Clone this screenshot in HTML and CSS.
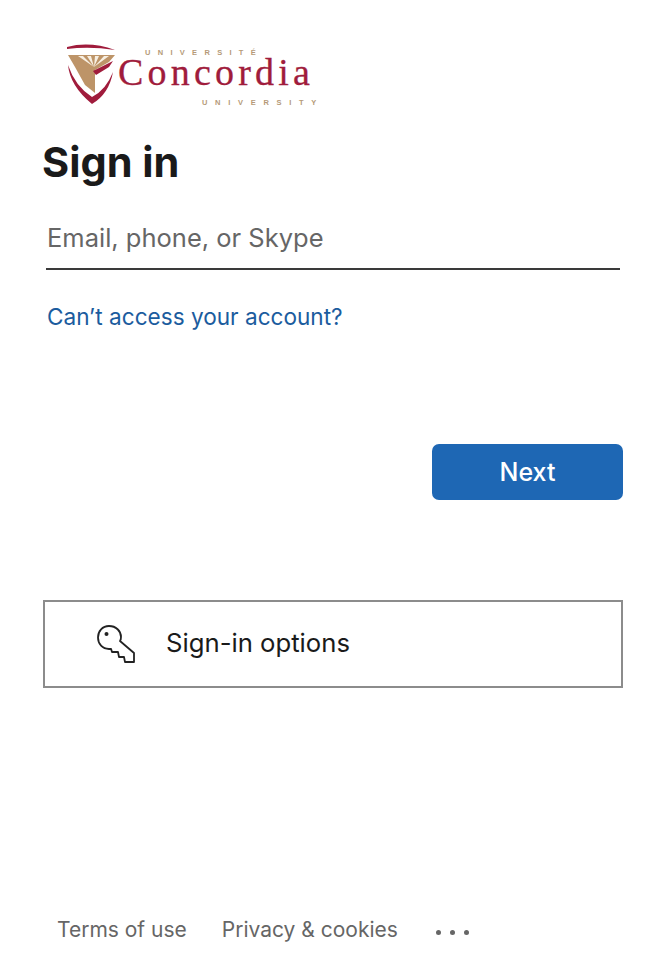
FILE: index.html
```html
<!DOCTYPE html>
<html lang="en">
<head>
  <meta charset="UTF-8">
  <title>Sign in</title>
  <link rel="stylesheet" href="styles.css">
</head>
<body>
  <div class="page">
    <svg class="logo" width="270" height="70" viewBox="0 0 270 70">
      <path d="M7 7 Q30 1 55 10 Q30 6 7 9 Z" fill="#a01c3c"/>
      <path d="M8 15 H55 L49 22 L35 30 V53 L25 45 L15 27 Z" fill="#bd9468"/>
      <path d="M18 16 L34 27 L23 16 Z M27 16 L34 27 L31 16 Z M35 16 L34 27 L39 16 Z M44 16 L34 27 L49 16 Z" fill="#f7efe2"/>
      <path d="M33 31 L53 21 L49 27 L36 35 Z" fill="#a01c3c"/>
      <path d="M8 25 Q10 46 32 64 Q49 54 53 32 Q46 50 32 57 Q15 46 8 25 Z" fill="#a01c3c"/>
      <text class="logo-small" x="85" y="15">UNIVERSITÉ</text>
      <text class="logo-name" x="58" y="45">Concordia</text>
      <text class="logo-small logo-wide" x="142" y="65">UNIVERSITY</text>
    </svg>

    <h1 class="title">Sign in</h1>

    <div class="field">Email, phone, or Skype</div>
    <a class="link" href="#">Can’t access your account?</a>

    <div class="actions">
      <button class="next">Next</button>
    </div>

    <div class="options">
      <svg class="key" width="40" height="40" viewBox="0 0 40 40">
        <path d="M13 2 C20 2 25 7 25 13 C25 14.500 24.700 16 24 17 L38 29 V38 H29 L28 33 H23 L22 28 H16 L15 24.800 C14.400 25 13.700 25 13 25 C6.500 25 2 20 2 13.500 C2 7 6.500 2 13 2 Z" fill="none" stroke="#222" stroke-width="1.800" stroke-linejoin="round"/>
        <circle cx="10.500" cy="10" r="2" fill="#222"/>
      </svg>
      <span class="options-label">Sign-in options</span>
    </div>

    <div class="footer">
      <a href="#">Terms of use</a>
      <a href="#">Privacy &amp; cookies</a>
      <span class="dots"><i></i><i></i><i></i></span>
    </div>
  </div>
</body>
</html>
```

FILE: styles.css
```css
* {
  margin: 0;
  padding: 0;
  box-sizing: border-box;
}

body {
  background: #fff;
  font-family: "Inter", "Liberation Sans", sans-serif;
}

.page {
  width: 666px;
  height: 954px;
  padding: 40px 43px 0;
  overflow: hidden;
}

.logo {
  display: block;
  margin-left: 17px;
}

.logo-name {
  font-family: "Liberation Serif", serif;
  font-size: 38px;
  letter-spacing: 4.200px;
  fill: #a01c3c;
  stroke: #a01c3c;
  stroke-width: 0.300px;
}

.logo-small {
  font-family: "Liberation Sans", sans-serif;
  font-size: 7.500px;
  font-weight: 700;
  letter-spacing: 7.300px;
  fill: #b59a78;
}

.logo-wide {
  letter-spacing: 7.700px;
}

.title {
  font-size: 41.500px;
  font-weight: 700;
  line-height: 50px;
  color: #1a1a1a;
  margin: 27px 0 0 -1px;
}

.field {
  margin: 25px 3px 0;
  width: 574px;
  height: 58px;
  padding: 10px 1px 0;
  border-bottom: 2px solid #3a3a3a;
  font-size: 25.500px;
  line-height: 32px;
  color: #666;
}

.link {
  display: block;
  margin: 33px 0 0 4px;
  font-size: 22.600px;
  line-height: 28px;
  color: #1b5c9e;
  text-decoration: none;
}

.actions {
  display: flex;
  justify-content: flex-end;
  margin-top: 113px;
}

.next {
  width: 191px;
  height: 56px;
  border: none;
  border-radius: 7px;
  background: #1e67b4;
  color: #fff;
  font-family: inherit;
  font-size: 25px;
  font-weight: 500;
}

.options {
  display: flex;
  align-items: center;
  gap: 30px;
  width: 580px;
  height: 88px;
  margin-top: 100px;
  padding-left: 51px;
  border: 2px solid #8c8c8c;
  font-size: 25.700px;
  color: #1a1a1a;
}

.options-label {
  margin-bottom: 3px;
}

.footer {
  display: flex;
  align-items: center;
  gap: 35px;
  margin: 228px 0 0 14px;
  font-size: 21px;
  line-height: 28px;
}

.footer a {
  color: #666;
  text-decoration: none;
}

.dots {
  display: flex;
  gap: 9px;
  margin: 4px 0 0 3px;
}

.dots i {
  width: 5px;
  height: 5px;
  border-radius: 50%;
  background: #666;
}
```
